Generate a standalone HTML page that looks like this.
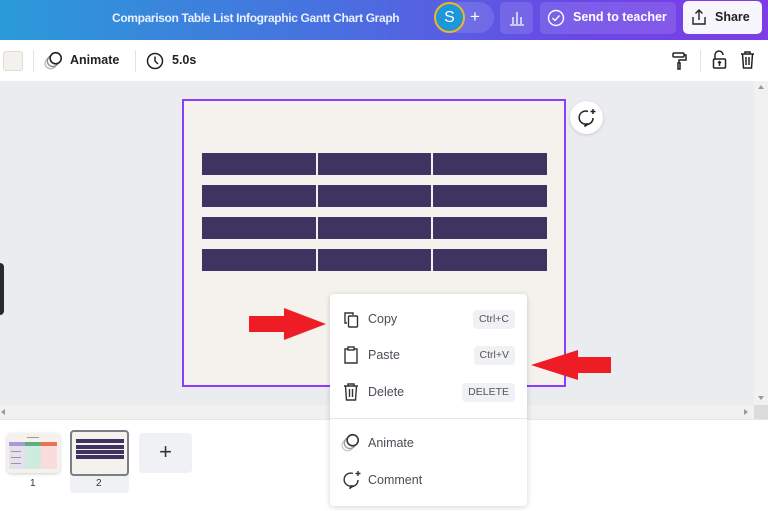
<!DOCTYPE html>
<html><head><meta charset="utf-8">
<style>
*{box-sizing:border-box;margin:0;padding:0}
body{width:768px;height:511px;overflow:hidden;position:relative;font-family:"Liberation Sans",sans-serif;background:#fff}
.abs{position:absolute}
#hdr{left:0;top:0;width:768px;height:40px;background:linear-gradient(90deg,#2a9bd9 0%,#4a6ee0 45%,#6a48e6 75%,#7d3ce6 100%)}
#tb{left:0;top:40px;width:768px;height:41px;background:#fff}
#ws{left:0;top:81px;width:754px;height:324px;background:#ebecf0}
#hs{left:0;top:405px;width:754px;height:14px;background:#f1f1f1}
#vs{left:754px;top:81px;width:14px;height:324px;background:#f1f1f1}
.cell{position:absolute;background:#3d3461;height:22px}
.mi{position:absolute;left:38px;font-size:12.5px;color:#4a4d55}
.kb{position:absolute;right:12px;height:19px;background:#f0f1f4;border-radius:4px;font-size:10.5px;color:#555;padding:0 6px;line-height:19px}
svg{position:absolute}
</style></head><body>
<div id="hdr" class="abs">
  <div class="abs" style="left:112px;top:11px;color:#e8f0ff;font-size:12px;font-weight:bold;letter-spacing:-0.35px">Comparison Table List Infographic Gantt Chart Graph</div>
  <div class="abs" style="left:444px;top:2px;width:50px;height:31px;border-radius:16px;background:rgba(255,255,255,0.12)"></div>
  <div class="abs" style="left:434px;top:2px;width:31px;height:31px;border-radius:50%;background:#1e97d8;border:2px solid #f0b429;color:#fff;font-size:16px;text-align:center;line-height:27px">S</div>
  <div class="abs" style="left:470px;top:7px;color:#fff;font-size:17px">+</div>
  <div class="abs" style="left:500px;top:2px;width:33px;height:32px;border-radius:5px;background:rgba(255,255,255,0.12)"></div>
  <svg style="left:508px;top:9px" width="18" height="18" viewBox="0 0 18 18" fill="none" stroke="#fff" stroke-width="1.3"><path d="M2 16h14M5 15V8M9 15V3M13 15V8"/></svg>
  <div class="abs" style="left:540px;top:2px;width:136px;height:32px;border-radius:5px;background:rgba(255,255,255,0.12)"></div>
  <svg style="left:547px;top:9px" width="18" height="18" viewBox="0 0 18 18" fill="none" stroke="#fff" stroke-width="1.4"><circle cx="9" cy="9" r="7.5"/><path d="M5.5 9l2.5 2.5 4.5-5"/></svg>
  <div class="abs" style="left:573px;top:10px;color:#fff;font-size:12.5px;font-weight:bold">Send to teacher</div>
  <div class="abs" style="left:683px;top:1px;width:79px;height:33px;border-radius:5px;background:#f7f5fd"></div>
  <svg style="left:690px;top:8px" width="18" height="18" viewBox="0 0 18 18" fill="none" stroke="#222" stroke-width="1.4"><path d="M9 12V2M5.5 5.5L9 2l3.5 3.5M3 9v7h12V9"/></svg>
  <div class="abs" style="left:715px;top:10px;color:#222;font-size:12.5px;font-weight:bold">Share</div>
</div>
<div id="tb" class="abs">
  <div class="abs" style="left:3px;top:11px;width:20px;height:20px;background:#f4f1ec;border:1px solid #ddd;border-radius:3px"></div>
  <div class="abs" style="left:33px;top:10px;width:1px;height:22px;background:#e3e3e3"></div>
  <svg style="left:44px;top:11px" width="20" height="20" viewBox="0 0 18 18" fill="none"><circle cx="6" cy="11" r="5" stroke="#bbb" stroke-width="1.2"/><circle cx="8" cy="9" r="5" stroke="#888" stroke-width="1.2"/><circle cx="10.5" cy="6.5" r="5" stroke="#222" stroke-width="1.4" fill="#fff"/></svg>
  <div class="abs" style="left:70px;top:13px;font-size:12.5px;color:#222;font-weight:bold">Animate</div>
  <div class="abs" style="left:135px;top:10px;width:1px;height:22px;background:#e3e3e3"></div>
  <svg style="left:146px;top:12px" width="18" height="18" viewBox="0 0 18 18" fill="none" stroke="#222" stroke-width="1.5"><circle cx="9" cy="9" r="7.5"/><path d="M9 4.5V9l3 3"/></svg>
  <div class="abs" style="left:172px;top:13px;font-size:12.5px;color:#222;font-weight:bold">5.0s</div>
  <svg style="left:670px;top:11px" width="18" height="20" viewBox="0 0 18 20" fill="none" stroke="#222" stroke-width="1.5"><rect x="3" y="2" width="11" height="4" rx="1"/><path d="M14 4h2v5H9v3M8 12h2v6H8z"/></svg>
  <div class="abs" style="left:700px;top:10px;width:1px;height:22px;background:#e3e3e3"></div>
  <svg style="left:711px;top:10px" width="17" height="20" viewBox="0 0 17 20" fill="none" stroke="#222" stroke-width="1.5"><path d="M4 9V5a4 4 0 018 0"/><rect x="2.5" y="9" width="12" height="9" rx="1"/><path d="M8.5 16v-4M7 13l1.5-1.5L10 13"/></svg>
  <svg style="left:739px;top:10px" width="17" height="20" viewBox="0 0 17 20" fill="none" stroke="#222" stroke-width="1.5"><path d="M2 4h13M6 4V2h5v2M3.5 4l1 14h8l1-14M7 7v8M10 7v8"/></svg>
</div>
<div id="ws" class="abs">
  <div class="abs" style="left:0;top:182px;width:4px;height:52px;background:#2a2a2e;border-radius:0 4px 4px 0"></div>
  <div class="abs" style="left:182px;top:18px;width:384px;height:288px;background:#f5f2ed;border:2px solid #8b3dff">
    <div class="cell" style="left:18px;top:52px;width:114px"></div><div class="cell" style="left:134px;top:52px;width:113px"></div><div class="cell" style="left:249px;top:52px;width:114px"></div>
    <div class="cell" style="left:18px;top:84px;width:114px"></div><div class="cell" style="left:134px;top:84px;width:113px"></div><div class="cell" style="left:249px;top:84px;width:114px"></div>
    <div class="cell" style="left:18px;top:116px;width:114px"></div><div class="cell" style="left:134px;top:116px;width:113px"></div><div class="cell" style="left:249px;top:116px;width:114px"></div>
    <div class="cell" style="left:18px;top:148px;width:114px"></div><div class="cell" style="left:134px;top:148px;width:113px"></div><div class="cell" style="left:249px;top:148px;width:114px"></div>
  </div>
  <div class="abs" style="left:570px;top:20px;width:33px;height:33px;border-radius:50%;background:#fff;box-shadow:0 1px 3px rgba(0,0,0,0.15)"></div>
  <svg style="left:577px;top:27px" width="20" height="20" viewBox="0 0 20 20" fill="none" stroke="#222" stroke-width="1.5"><path d="M11 3.5A6.5 6.5 0 1 0 9.5 16l-2 2.5 3-2a6.5 6.5 0 0 0 5.5-6.5"/><path d="M16 1v5M13.5 3.5h5"/></svg>
  <svg style="left:248px;top:226px" width="80" height="34" viewBox="0 0 80 34"><path d="M1 9h35V1l42 16-42 16v-8H1z" fill="#ee1c25"/></svg>
  <svg style="left:530px;top:269px" width="82" height="30" viewBox="0 0 82 30"><path d="M81 7H48V0L1 15l47 15v-7h33z" fill="#ee1c25"/></svg>
</div>
<div id="vs" class="abs"><div class="abs" style="left:4px;top:4px;border:3px solid transparent;border-bottom:4px solid #999;border-top:0"></div><div class="abs" style="left:4px;top:315px;border:3px solid transparent;border-top:4px solid #999;border-bottom:0"></div></div>
<div id="hs" class="abs"><div class="abs" style="left:1px;top:4px;border:3px solid transparent;border-right:4px solid #999;border-left:0"></div><div class="abs" style="left:744px;top:4px;border:3px solid transparent;border-left:4px solid #999;border-right:0"></div></div>
<div class="abs" style="left:754px;top:405px;width:14px;height:14px;background:#dcdcdc"></div>
<div class="abs" style="left:0;top:419px;width:768px;height:1px;background:#e6e6e6"></div>
<div class="abs" style="left:7px;top:433px;width:53px;height:40px;background:#f5f2ed;border-radius:4px;box-shadow:0 1px 3px rgba(0,0,0,0.2);overflow:hidden">
  <div class="abs" style="left:20px;top:4px;width:12px;height:1px;background:#999"></div>
  <div class="abs" style="left:2px;top:9px;width:16px;height:4px;background:#a59bd9"></div>
  <div class="abs" style="left:18px;top:9px;width:16px;height:4px;background:#5fae82"></div>
  <div class="abs" style="left:34px;top:9px;width:16px;height:4px;background:#ea7356"></div>
  <div class="abs" style="left:2px;top:13px;width:16px;height:23px;background:#e6e0ee"></div>
  <div class="abs" style="left:18px;top:13px;width:16px;height:23px;background:#cfeadf"></div>
  <div class="abs" style="left:34px;top:13px;width:16px;height:23px;background:#fbdcdc"></div>
  <div class="abs" style="left:4px;top:18px;width:10px;height:1px;background:#999"></div>
  <div class="abs" style="left:4px;top:24px;width:10px;height:1px;background:#999"></div>
  <div class="abs" style="left:4px;top:30px;width:10px;height:1px;background:#999"></div>
</div>
<div class="abs" style="left:30px;top:478px;font-size:10px;color:#333">1</div>
<div class="abs" style="left:70px;top:430px;width:59px;height:63px;background:#f0f1f4;border-radius:4px"></div>
<div class="abs" style="left:70px;top:430px;width:59px;height:46px;border:2px solid #7a7f87;border-radius:4px;background:#f5f2ed">
  <div class="abs" style="left:4px;top:7px;width:48px;height:4px;background:#3d3461"></div>
  <div class="abs" style="left:4px;top:13px;width:48px;height:4px;background:#3d3461"></div>
  <div class="abs" style="left:4px;top:18px;width:48px;height:4px;background:#3d3461"></div>
  <div class="abs" style="left:4px;top:23px;width:48px;height:4px;background:#3d3461"></div>
</div>
<div class="abs" style="left:96px;top:478px;font-size:10px;color:#333">2</div>
<div class="abs" style="left:139px;top:433px;width:53px;height:40px;background:#f0f1f4;border-radius:4px;text-align:center;font-size:22px;line-height:38px;color:#333">+</div>
<div class="abs" style="left:330px;top:294px;width:197px;height:212px;background:#fff;border-radius:4px;box-shadow:0 1px 6px rgba(0,0,0,0.18)">
  <svg style="left:13px;top:17px" width="16" height="17" viewBox="0 0 16 17" fill="none" stroke="#333" stroke-width="1.4"><path d="M4 12H2V2h8v2"/><rect x="5.5" y="5" width="9" height="11" rx="1"/></svg>
  <div class="mi" style="top:18px">Copy</div><div class="kb" style="top:16px">Ctrl+C</div>
  <svg style="left:13px;top:52px" width="16" height="18" viewBox="0 0 16 18" fill="none" stroke="#333" stroke-width="1.4"><path d="M5 3H2v14h12V3h-3"/><rect x="5" y="1" width="6" height="3"/></svg>
  <div class="mi" style="top:54px">Paste</div><div class="kb" style="top:52px">Ctrl+V</div>
  <svg style="left:13px;top:89px" width="16" height="18" viewBox="0 0 16 18" fill="none" stroke="#333" stroke-width="1.4"><path d="M1 3h14M5 3V1h6v2M2.5 3l1 14h9l1-14M6.5 6v8M9.5 6v8"/></svg>
  <div class="mi" style="top:91px">Delete</div><div class="kb" style="top:89px">DELETE</div>
  <div class="abs" style="left:0;top:124px;width:197px;height:1px;background:#e3e5ea"></div>
  <svg style="left:11px;top:139px" width="20" height="20" viewBox="0 0 18 18" fill="none"><circle cx="6" cy="11" r="5" stroke="#ccc" stroke-width="1.2"/><circle cx="8" cy="9" r="5" stroke="#999" stroke-width="1.2"/><circle cx="10.5" cy="6.5" r="5" stroke="#333" stroke-width="1.4" fill="#fff"/></svg>
  <div class="mi" style="top:142px">Animate</div>
  <svg style="left:12px;top:176px" width="20" height="20" viewBox="0 0 20 20" fill="none" stroke="#333" stroke-width="1.4"><path d="M11 3.5A6.5 6.5 0 1 0 9.5 16l-2 2.5 3-2a6.5 6.5 0 0 0 5.5-6.5"/><path d="M16 1v5M13.5 3.5h5"/></svg>
  <div class="mi" style="top:179px">Comment</div>
</div>
</body></html>
